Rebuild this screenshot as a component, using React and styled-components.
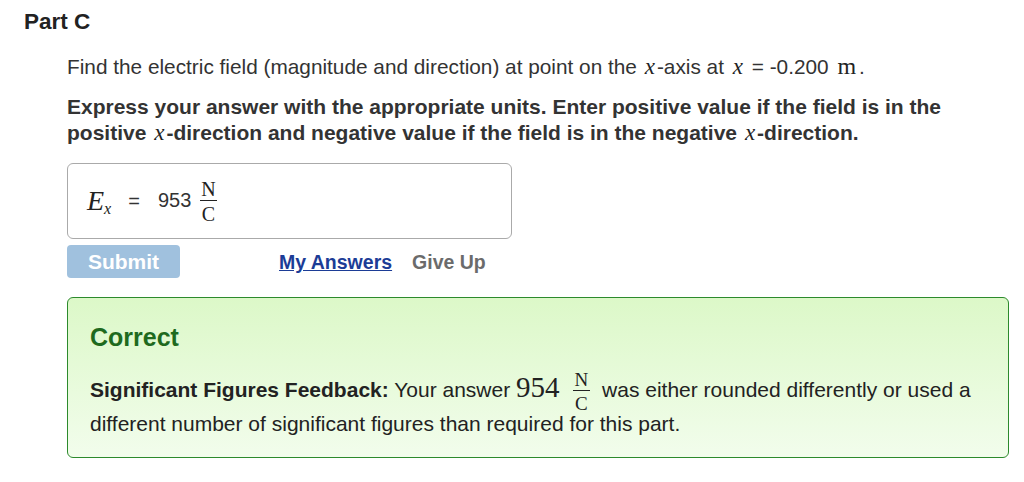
import styled, { createGlobalStyle } from 'styled-components';

const GlobalStyle = createGlobalStyle`
  body {
    margin: 0;
    background: #fff;
    font-family: "Liberation Sans", Arial, sans-serif;
    color: #333;
  }
`;

const Page = styled.div`
  padding: 10px 0 0 24px;
  width: 1000px;
`;

const PartTitle = styled.h2`
  margin: 0;
  font-size: 22.5px;
  line-height: 24px;
  font-weight: 700;
  color: #222;
`;

const Body = styled.div`
  margin-left: 43px;
  width: 942px;
`;

const Prompt = styled.p`
  margin: 19px 0 0;
  font-size: 20.8px;
  line-height: 26px;
  color: #333;
`;

const Instructions = styled.p`
  margin: 14px 0 0;
  font-size: 21px;
  line-height: 26px;
  font-weight: 700;
  color: #333;
`;

const MathVar = styled.span`
  font-family: "Liberation Serif", "DejaVu Serif", serif;
  font-style: ${p => (p.upright ? 'normal' : 'italic')};
  font-size: ${p => p.size || 23}px;
  font-weight: 400;
  color: #222;
  margin: 0 ${p => p.gap || 0}px;
`;

const Frac = styled.span`
  display: inline-flex;
  flex-direction: column;
  align-items: center;
  vertical-align: middle;
  font-family: "Liberation Serif", "DejaVu Serif", serif;
  font-size: ${p => p.size || 19}px;
  line-height: 1;
  color: #222;
  margin: -8px 6px -8px ${p => p.lead || 8}px;
`;

const FracPart = styled.span`
  padding: 0 2px;
  border-top: ${p => (p.bottom ? '1.3px solid #222' : 'none')};
  padding-top: ${p => (p.bottom ? '3px' : '0')};
  padding-bottom: ${p => (p.bottom ? '0' : '1px')};
`;

const AnswerBox = styled.div`
  margin-top: 17px;
  width: 445px;
  height: 76px;
  box-sizing: border-box;
  border: 1.5px solid #aaa;
  border-radius: 6px;
  display: flex;
  align-items: center;
  padding-left: 19px;
  font-size: 20px;
`;

const Subscript = styled.span`
  display: inline-block;
  transform: translateY(4px);
`;

const Equals = styled.span`
  margin: 0 18px 0 17px;
  color: #333;
`;

const Actions = styled.div`
  margin-top: 6px;
  display: flex;
  align-items: center;
`;

const SubmitButton = styled.button`
  width: 113px;
  height: 33px;
  border: none;
  border-radius: 4px;
  background: #a0c1de;
  color: #fff;
  font-family: "Liberation Sans", Arial, sans-serif;
  font-size: 21px;
  font-weight: 700;
  padding: 0;
`;

const LinkText = styled.a`
  font-size: 19.5px;
  font-weight: 700;
  color: ${p => (p.muted ? '#6b6b6b' : '#1c3c96')};
  text-decoration: ${p => (p.muted ? 'none' : 'underline')};
  margin-left: ${p => p.offset}px;
  padding-top: 2px;
`;

const Feedback = styled.div`
  margin-top: 19px;
  width: 942px;
  height: 161px;
  box-sizing: border-box;
  border: 1.5px solid #2c8a2c;
  border-radius: 6px;
  background: linear-gradient(to bottom, #dcf8c8, #f2fdec);
  padding: 24px 22px 0;
`;

const FeedbackTitle = styled.h3`
  margin: 0;
  font-size: 25px;
  line-height: 30px;
  font-weight: 700;
  color: #1e6a1e;
`;

const FeedbackText = styled.p`
  margin: 18px 0 0;
  font-size: 21px;
  line-height: 34px;
  color: #222;
`;

const App = () => {
  return (
    <Page>
      <GlobalStyle />
      <PartTitle>Part C</PartTitle>
      <Body>
        <Prompt>
          Find the electric field (magnitude and direction) at point on the <MathVar gap={2}>x</MathVar>-axis at{' '}
          <MathVar gap={3}>x</MathVar> = -0.200 <MathVar upright size={24} gap={3}>m</MathVar>.
        </Prompt>
        <Instructions>
          Express your answer with the appropriate units. Enter positive value if the field is in the positive{' '}
          <MathVar gap={2}>x</MathVar>-direction and negative value if the field is in the negative{' '}
          <MathVar gap={2}>x</MathVar>-direction.
        </Instructions>
        <AnswerBox>
          <span>
            <MathVar size={28}>E</MathVar>
            <Subscript>
              <MathVar size={16}>x</MathVar>
            </Subscript>
          </span>
          <Equals>=</Equals>
          <span>
            953
            <Frac size={20}>
              <FracPart>N</FracPart>
              <FracPart bottom>C</FracPart>
            </Frac>
          </span>
        </AnswerBox>
        <Actions>
          <SubmitButton>Submit</SubmitButton>
          <LinkText href="#" offset={99}>My Answers</LinkText>
          <LinkText muted offset={20}>Give Up</LinkText>
        </Actions>
        <Feedback>
          <FeedbackTitle>Correct</FeedbackTitle>
          <FeedbackText>
            <b>Significant Figures Feedback:</b> Your answer <MathVar upright size={29}>954</MathVar>
            <Frac lead={13}>
              <FracPart>N</FracPart>
              <FracPart bottom>C</FracPart>
            </Frac>{' '}
            was either rounded differently or used a different number of significant figures than required for this part.
          </FeedbackText>
        </Feedback>
      </Body>
    </Page>
  );
};

export default App;
